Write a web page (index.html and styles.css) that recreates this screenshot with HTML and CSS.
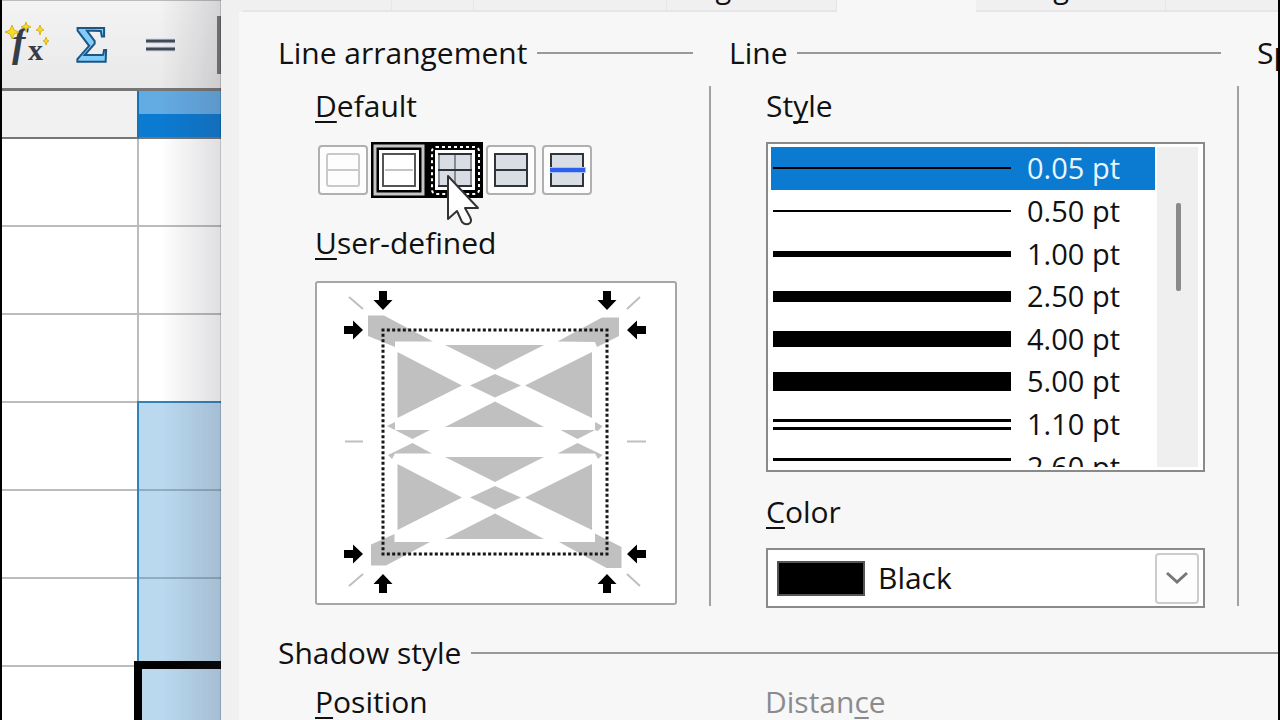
FILE: index.html
```html
<!DOCTYPE html>
<html lang="en">
<head>
<meta charset="utf-8">
<title>Format Cells</title>
<link rel="stylesheet" href="styles.css">
</head>
<body>
<main class="screen">
  <section class="sheet" aria-label="Spreadsheet">
    <div class="toolbar">
      <button class="tool" aria-label="Function Wizard">
        <svg width="46" height="48" viewBox="0 0 46 48">
          <text x="8" y="35" class="fx-f">f</text>
          <text x="24" y="39" class="fx-x">x</text>
          <g fill="#f7dc27" stroke="#d9b51c">
            <path d="M8 4l2 5 5 2-5 2-2 5-2-5-5-2 5-2z"/>
            <path d="M22 1l1 3 4 2-4 1-1 4-1-4-4-1 4-2z"/>
            <path d="M36 4l1 3 3 2-3 1-1 4-1-4-3-1 3-2z"/>
            <path d="M42 16l1 3 2 1-2 1-1 3-1-3-2-1 2-1z"/>
          </g>
        </svg>
      </button>
      <button class="tool" aria-label="Select Function">
        <svg width="44" height="48" viewBox="0 0 44 48"><text x="24" y="40" class="sigma">Σ</text></svg>
      </button>
      <button class="tool" aria-label="Formula">
        <svg width="32" height="48" viewBox="0 0 32 48"><path d="M2 20h29M2 28h29" stroke="#dde3ea" stroke-width="6"/><path d="M2 20h29M2 28h29" stroke="#414957" stroke-width="3"/></svg>
      </button>
      <span class="tool-edge"></span>
    </div>
    <table class="cells">
      <thead><tr><th class="wide"></th><th class="chosen"></th></tr></thead>
      <tbody>
        <tr><td></td><td></td></tr>
        <tr><td></td><td></td></tr>
        <tr><td></td><td></td></tr>
        <tr><td></td><td class="range range-top"></td></tr>
        <tr><td></td><td class="range"></td></tr>
        <tr><td></td><td class="range"></td></tr>
        <tr><td></td><td class="range active"></td></tr>
      </tbody>
    </table>
    <div class="shade"></div>
  </section>

  <section class="dialog" aria-label="Format Cells">
    <nav class="tabs" role="tablist">
      <button class="tab tab-numbers" role="tab">Numbers</button>
      <button class="tab tab-font" role="tab">Font</button>
      <button class="tab tab-effects" role="tab">Font Effects</button>
      <button class="tab tab-align" role="tab">Alignment</button>
      <button class="tab tab-borders" role="tab" aria-selected="true">Borders</button>
      <button class="tab tab-back" role="tab">Background</button>
      <button class="tab tab-cell" role="tab">Cell Protection</button>
    </nav>
    <div class="panel">
      <div class="groups">
        <section class="group">
          <h2 class="head">Line arrangement</h2>
          <div class="body">
            <p class="label" id="preset"><u>D</u>efault</p>
            <div class="presets" role="group" aria-labelledby="preset">
              <button class="preset" aria-label="No borders">
                <svg viewBox="0 0 56 56"><rect x="4" y="4" width="48" height="48" rx="3" class="plate"/><g fill="none" stroke="#c9c9c9" stroke-width="2"><rect x="12" y="12" width="32" height="32" rx="2"/><path d="M12 28h32"/></g></svg>
              </button>
              <button class="preset" aria-label="Outer border only">
                <svg viewBox="0 0 56 56"><path d="M0 0h56v56H0z"/><rect x="4" y="4" width="48" height="48" fill="#000" stroke="#c6c6c6" stroke-width="3"/><rect x="7" y="7" width="42" height="42" fill="#fff" stroke="#000" stroke-width="2"/><rect x="12" y="12" width="32" height="32" fill="#fff" stroke="#555" stroke-width="2"/><path d="M14 28h28" stroke="#c4c4c4" stroke-width="2"/></svg>
              </button>
              <button class="preset" aria-label="Outer border and horizontal and vertical lines" aria-pressed="true">
                <svg viewBox="0 0 56 56"><path d="M0 0h56v56H0z"/><rect x="5" y="5" width="47" height="47" rx="4" fill="none" stroke="#fff" stroke-width="2" stroke-dasharray="3 3"/><rect x="8" y="8" width="40" height="40" fill="#fff"/><path d="M12 12h32v32H12z" fill="#d9dde3"/><path d="M28 12v32M12 12v32M44 12v32" stroke="#858b94" stroke-width="2"/><path d="M11 12h34M11 28h34M11 44h34" stroke="#2c3037" stroke-width="2"/></svg>
              </button>
              <button class="preset" aria-label="Outer border and horizontal lines">
                <svg viewBox="0 0 56 56"><rect x="4" y="4" width="48" height="48" rx="3" class="plate"/><rect x="12" y="12" width="32" height="32" fill="#d9dee4" stroke="#30343b" stroke-width="2"/><path d="M12 28h32" stroke="#30343b" stroke-width="2"/></svg>
              </button>
              <button class="preset" aria-label="Outer border without inner lines">
                <svg viewBox="0 0 56 56"><rect x="4" y="4" width="48" height="48" rx="3" class="plate"/><rect x="12" y="12" width="32" height="32" fill="#d9dee4" stroke="#30343b" stroke-width="2"/><path d="M11 28h36" stroke="#a9c0fb" stroke-width="6"/><path d="M11 28h35" stroke="#2d60ea" stroke-width="4"/></svg>
              </button>
              <svg class="pointer" width="36" height="56" viewBox="444 171 36 56"><path d="M448 176v43l9-8 5 11q4 4 8 1 2-2 0-6l-5-9h13z" fill="#fff" stroke="#333" stroke-width="2" stroke-linejoin="round"/></svg>
            </div>
            <p class="label" id="custom"><u>U</u>ser-defined</p>
            <div class="preview" role="img" aria-labelledby="custom">
              <svg viewBox="317 283 358 320">
                <g fill="#c0c0c0">
                  <path d="M368 315.500h16L433 341.500H395V347L368 336z"/>
                  <path d="M557.500 341.500L602 317.500H619V336L597 347 595 342z"/>
                  <path d="M371 544.500L394.500 534V542H430L386 565.500H371z"/>
                  <path d="M559 542H595V533.500L621.500 547V568H606.500z"/>
                  <g id="half">
                    <path d="M445 345h99L495 370z"/>
                    <path d="M470 385.500L495 374 521 385.500 495 397.500z"/>
                    <path d="M397.500 352L462 385.500 397.500 418z"/>
                    <path d="M592 352L525 385.500 592 418z"/>
                    <path d="M495 401.500L544 427H445z"/>
                  </g>
                  <use href="#half" y="112"/>
                  <path d="M387 426l8-4v8h35l-17.500 9L395 430zM412.500 443L432 453.500H395l-3 5.500-4-4z"/>
                  <path d="M602.500 426l-7.500-4v8H560.500l17 9L595 430l3 1zM577.500 443L557.500 453.500H595l3 5.500 4.500-4z"/>
                </g>
                <path d="M349 297l14 12M640 297l-13 12M349 586l14-12M640 586l-13-12M345 441.500h18M627 441.500h19" stroke="#bfbfbf" stroke-width="2"/>
                <path d="M381.500 330H609M381.500 554H609M383 328.500V555M607 328.500V555" fill="none" stroke="#161616" stroke-width="3" stroke-dasharray="3 2.333"/>
                <path id="down" d="M379 291h8v9h5.500L383 310 373.500 300H379z"/>
                <use href="#down" x="224"/>
                <path id="up" d="M379 593h8v-9h5.500L383 574 373.500 584H379z"/>
                <use href="#up" x="224"/>
                <path id="right" d="M344 326v8h9v5.500L363 330 353 320.500V326z"/>
                <use href="#right" y="224"/>
                <path id="left" d="M646 326v8h-9v5.500L627 330 637 320.500V326z"/>
                <use href="#left" y="224"/>
              </svg>
            </div>
          </div>
        </section>

        <section class="group">
          <h2 class="head">Line</h2>
          <div class="body">
            <p class="label" id="style">St<u>y</u>le</p>
            <div class="listbox">
              <div class="clip">
                <ul class="styles" role="listbox" aria-labelledby="style" tabindex="0">
                  <li role="option" aria-selected="true"><i class="stroke s1"></i>0.05 pt</li>
                  <li role="option"><i class="stroke s1"></i>0.50 pt</li>
                  <li role="option"><i class="stroke s2"></i>1.00 pt</li>
                  <li role="option"><i class="stroke s3"></i>2.50 pt</li>
                  <li role="option"><i class="stroke s4"></i>4.00 pt</li>
                  <li role="option"><i class="stroke s5"></i>5.00 pt</li>
                  <li role="option"><i class="stroke d1"></i>1.10 pt</li>
                  <li role="option"><i class="stroke d2"></i>2.60 pt</li>
                </ul>
              </div>
              <div class="track"><div class="thumb"></div></div>
            </div>
            <label class="label label-color" for="color"><u>C</u>olor</label>
            <div class="combo">
              <span class="swatch"></span>
              <select id="color"><option>Black</option></select>
              <button class="drop" aria-label="Show colors">
                <svg width="24" height="14" viewBox="0 0 24 14"><path d="M2 2l10 9 10-9" fill="none" stroke="#777" stroke-width="3"/></svg>
              </button>
            </div>
          </div>
        </section>

        <section class="group spacing">
          <h2 class="head">Spacing</h2>
        </section>
      </div>

      <section class="shadow">
        <h2 class="head">Shadow style</h2>
        <div class="shadow-row">
          <span class="label"><u>P</u>osition</span>
          <span class="label off">Distan<u>c</u>e</span>
        </div>
      </section>
    </div>
  </section>
</main>
</body>
</html>
```
FILE: styles.css
```css
* { box-sizing: border-box; }

body {
  margin: 0;
  background: #000;
  color: #111;
  font: 30px/40px "Open Sans", "Noto Sans", sans-serif;
}

button, select { font: inherit; color: inherit; }
h2, p, ul { margin: 0; padding: 0; font: inherit; }

u {
  text-decoration-thickness: 2px;
  text-underline-offset: 4px;
  text-decoration-skip-ink: none;
}

.screen {
  display: flex;
  height: 100vh;
  overflow: hidden;
  border: solid #000;
  border-width: 0 2px;
}

/* Spreadsheet behind the dialog */
.sheet {
  position: relative;
  flex: 0 0 219px;
  overflow: hidden;
  background: #fff;
}

.toolbar {
  display: flex;
  align-items: center;
  gap: 20px;
  height: 91px;
  padding-left: 2px;
  border-top: 1px solid #bbb;
  border-bottom: 3px solid #767676;
  background: linear-gradient(#f3f3f3, #e9e9e9);
}

.tool { padding: 0; border: 0; background: none; }
.tool + .tool { margin-left: -2px; }
.tool + .tool + .tool { margin-left: 12px; }
.tool svg { display: block; }
.fx-f { font: italic bold 40px "Liberation Serif", serif; fill: #363d47; }
.fx-x { font: bold 30px "Liberation Serif", serif; fill: #363d47; }
.sigma {
  font: bold 50px "Liberation Serif", serif;
  text-anchor: middle;
  fill: #83ccfa;
  stroke: #1c5684;
  stroke-width: 2px;
}
.tool-edge { width: 4px; height: 58px; margin-left: auto; background: #777; }

.cells { width: 100%; border-collapse: separate; border-spacing: 0; table-layout: fixed; }
.cells th, .cells td { padding: 0; }
.cells th { height: 48px; border-bottom: 2px solid #767676; background: #f1f1f1; }
.cells .wide { width: 137px; border-right: 2px solid #1673b8; }
.cells .chosen { background: linear-gradient(#63abe3 23px, #0b7ad1 23px); }
.cells td {
  height: 88px;
  border-right: 2px solid #bcbcbc;
  border-bottom: 2px solid #bcbcbc;
}
.cells tr td:last-child { border-right: 0; }
.cells .range { position: relative; background: #bad9ef; border-bottom-color: #91adc2; }
.cells .range::before {
  content: "";
  position: absolute;
  inset: -2px 0 -2px -2px;
  border-left: 2px solid #2e83bb;
}
.cells .range-top::before { border-top: 2px solid #2e83bb; }
.cells .active::before {
  inset: -6px -8px -8px -5px;
  border: 8px solid #000;
}
.shade {
  position: absolute;
  inset: 0 0 0 auto;
  width: 60px;
  border-right: 1px solid rgba(0, 0, 0, .25);
  background: linear-gradient(90deg, transparent, rgba(60, 50, 70, .16));
}

/* Dialog */
.dialog {
  display: flex;
  flex-direction: column;
  flex: 1;
  min-width: 0;
  overflow: hidden;
  padding-left: 18px;
  background: #f0f0f1;
}

.tabs { display: flex; flex: none; height: 12px; padding-left: 4px; }
.tab {
  display: flex;
  flex: none;
  align-items: flex-end;
  justify-content: center;
  height: 12px;
  padding: 0 0 3px;
  border: solid #e6e6e8;
  border-width: 0 1px 2px 0;
  background: #f0f0f1;
  font-size: 29px;
  line-height: 40px;
  white-space: nowrap;
}
.tab[aria-selected] { border-color: #f7f7f7; background: #f7f7f7; }
.tab-numbers { width: 149px; }
.tab-font { width: 82px; }
.tab-effects { width: 193px; }
.tab-align { width: 170px; }
.tab-borders { width: 139px; }
.tab-back { width: 190px; }
.tab-cell { width: 220px; }

.panel { flex: 1; padding: 21px 0 0 39px; background: #f7f7f7; }

.groups {
  display: grid;
  grid-template-columns: 433px minmax(0, 1fr) 21px;
  gap: 18px;
}
.spacing { overflow: hidden; }

.head { display: flex; align-items: center; gap: 10px; white-space: nowrap; }
.head::after { content: ""; flex: 1; height: 2px; background: #999; }
.group .head { margin: 0 18px 13px 0; }
.spacing .head { margin-right: 0; }

.body {
  height: 520px;
  padding: 0 32px 0 37px;
  border-right: 2px solid #a2a2a2;
}

.label { display: block; }

.presets { position: relative; display: flex; margin: 16px 0 25px; }
.preset { width: 56px; height: 56px; padding: 0; border: 0; background: none; }
.preset svg { display: block; }
.plate { fill: #fdfdfd; stroke: #b0b0b0; stroke-width: 2px; }
.pointer { position: absolute; left: 129px; top: 29px; }

.preview {
  width: 362px;
  margin-top: 18px;
  border: 2px solid #a6a6a6;
  border-radius: 3px;
  background: #fff;
}
.preview svg { display: block; }

.listbox {
  display: flex;
  height: 330px;
  margin-top: 16px;
  padding: 3px 5px 3px 3px;
  border: 2px solid #8a8a8a;
  background: #fff;
  font-size: 29px;
}
.clip { flex: 1; overflow: hidden; }
.styles {
  display: grid;
  grid-template-rows: repeat(8, 1fr);
  height: 341px;
  list-style: none;
}
.styles li { display: flex; align-items: center; gap: 16px; padding-left: 2px; }
.styles li[aria-selected] { background: #0b7ad1; color: #e9f6ff; }
.stroke { width: 238px; background: #000; }
.s1 { height: 2px; }
.s2 { height: 6px; }
.s3 { height: 11px; }
.s4 { height: 16px; }
.s5 { height: 19px; }
.d1, .d2 { border: solid #000; border-width: 3px 0; background: none; }
.d1 { height: 11px; }
.d2 { height: 17px; }
.track { width: 41px; margin-left: 2px; padding: 56px 0 0 19px; background: #efefef; }
.thumb { width: 5px; height: 88px; border-radius: 2px; background: #8a8a8a; }

.label-color { margin-top: 20px; }
.combo {
  display: flex;
  align-items: center;
  height: 60px;
  margin-top: 16px;
  padding: 0 4px 0 9px;
  border: 2px solid #8a8a8a;
  background: #fff;
}
.swatch { width: 88px; height: 35px; border: 2px solid #555; background: #000; }
.combo select {
  flex: 1;
  min-width: 0;
  height: 44px;
  padding: 0 0 0 13px;
  border: 0;
  background: none;
  appearance: none;
}
.drop {
  display: flex;
  align-items: center;
  justify-content: center;
  width: 44px;
  height: 51px;
  padding: 0;
  border: 2px solid #ccc;
  border-radius: 4px;
  background: #fdfdfd;
}

.shadow { margin-top: 27px; }
.shadow-row { display: grid; grid-template-columns: 450px 1fr; padding: 9px 0 0 37px; }
.off { color: #8b8b8f; }
```
